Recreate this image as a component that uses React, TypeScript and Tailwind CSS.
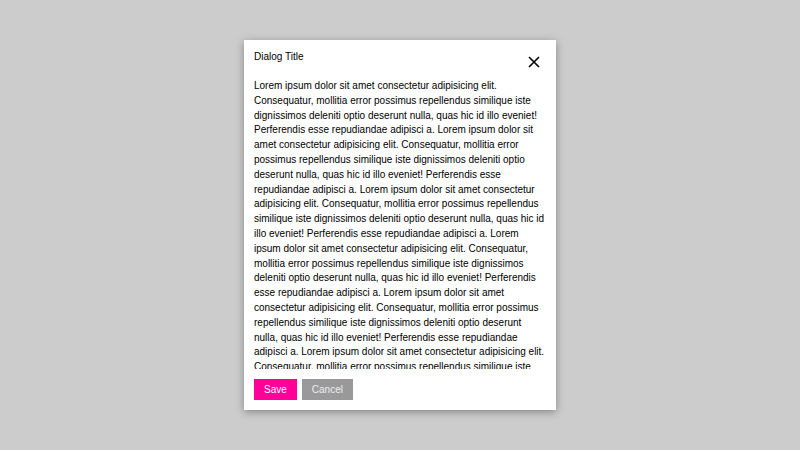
import React from "react";

const P =
  "Lorem ipsum dolor sit amet consectetur adipisicing elit. Consequatur, mollitia error possimus repellendus similique iste dignissimos deleniti optio deserunt nulla, quas hic id illo eveniet! Perferendis esse repudiandae adipisci a.";

export default function App() {
  const text = Array(8).fill(P).join(" ");
  return (
    <div
      className="w-[800px] h-[450px] bg-[#cccccc] flex items-center justify-center"
      style={{ fontFamily: '"Liberation Sans", Arial, sans-serif' }}
    >
      <div className="w-[312px] h-[370px] bg-white shadow-[0_2px_8px_rgba(0,0,0,0.35)] p-[10px] flex flex-col">
        <div className="flex justify-between items-start h-[24px] shrink-0">
          <div className="text-[10px] leading-[14px] text-black">Dialog Title</div>
          <button className="w-[24px] h-[24px] flex items-center justify-center">
            <svg width="12" height="12" viewBox="0 0 12 12">
              <path d="M1 1 L11 11 M11 1 L1 11" stroke="#000" strokeWidth="1.6" />
            </svg>
          </button>
        </div>
        <div className="mt-[5px] h-[290px] shrink-0 overflow-hidden text-[10px] leading-[14.8px] text-black">
          {text}
        </div>
        <div className="flex gap-[5px] mt-[10px] shrink-0">
          <button className="h-[21px] px-[10px] bg-[#ff0099] text-white text-[10px] leading-[21px]">Save</button>
          <button className="h-[21px] px-[10px] bg-[#999999] text-[#eeeeee] text-[10px] leading-[21px]">Cancel</button>
        </div>
      </div>
    </div>
  );
}
